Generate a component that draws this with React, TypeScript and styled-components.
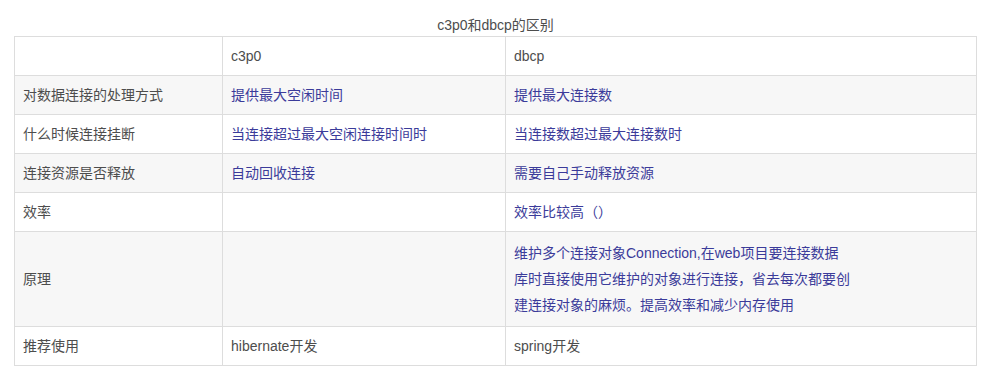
import styled, { createGlobalStyle } from "styled-components";

const GlobalStyle = createGlobalStyle`
  html, body {
    margin: 0;
    padding: 0;
    background: #fff;
  }
  body {
    font-family: "Liberation Sans", "Noto Sans CJK SC", sans-serif;
    font-size: 14px;
    color: #4d4d4d;
  }
`;

type Tone = "plain" | "link";

interface RowData {
  label: string;
  c3p0: string[];
  dbcp: string[];
  c3p0Tone?: Tone;
  dbcpTone?: Tone;
}

const rows: RowData[] = [
  { label: "对数据连接的处理方式", c3p0: ["提供最大空闲时间"], dbcp: ["提供最大连接数"], c3p0Tone: "link", dbcpTone: "link" },
  { label: "什么时候连接挂断", c3p0: ["当连接超过最大空闲连接时间时"], dbcp: ["当连接数超过最大连接数时"], c3p0Tone: "link", dbcpTone: "link" },
  { label: "连接资源是否释放", c3p0: ["自动回收连接"], dbcp: ["需要自己手动释放资源"], c3p0Tone: "link", dbcpTone: "link" },
  { label: "效率", c3p0: [], dbcp: ["效率比较高（）"], dbcpTone: "link" },
  {
    label: "原理",
    c3p0: [],
    dbcp: [
      "维护多个连接对象Connection,在web项目要连接数据",
      "库时直接使用它维护的对象进行连接，省去每次都要创",
      "建连接对象的麻烦。提高效率和减少内存使用",
    ],
    dbcpTone: "link",
  },
  { label: "推荐使用", c3p0: ["hibernate开发"], dbcp: ["spring开发"] },
];

const Page = styled.div`
  padding: 14px 16px 0 14px;
`;

const Table = styled.table`
  width: 962px;
  table-layout: fixed;
  border-collapse: collapse;
`;

const Caption = styled.caption`
  line-height: 22px;
  color: #4d4d4d;
  font-size: 14px;
`;

const Row = styled.tr<{ $shaded?: boolean }>`
  background: ${({ $shaded }) => ($shaded ? "#f7f7f7" : "#fff")};
`;

const Cell = styled.td<{ $tone?: Tone; $multi?: boolean }>`
  border: 1px solid #ddd;
  padding: 8px;
  line-height: ${({ $multi }) => ($multi ? "26px" : "22px")};
  color: ${({ $tone }) => ($tone === "link" ? "#3b3b9a" : "#4d4d4d")};
  vertical-align: middle;
  text-align: left;
  white-space: nowrap;
`;

const Lines = ({ lines }: { lines: string[] }) => (
  <>
    {lines.map((l, i) => (
      <span key={i}>
        {i > 0 && <br />}
        {l}
      </span>
    ))}
  </>
);

export default function App() {
  return (
    <Page>
      <GlobalStyle />
      <Table>
        <Caption>c3p0和dbcp的区别</Caption>
        <colgroup>
          <col style={{ width: 208 }} />
          <col style={{ width: 283 }} />
          <col style={{ width: 471 }} />
        </colgroup>
        <tbody>
          <Row>
            <Cell></Cell>
            <Cell>c3p0</Cell>
            <Cell>dbcp</Cell>
          </Row>
          {rows.map((r, i) => {
            const multi = r.dbcp.length > 1;
            return (
              <Row key={r.label} $shaded={i % 2 === 0}>
                <Cell>{r.label}</Cell>
                <Cell $tone={r.c3p0Tone} $multi={multi}>
                  <Lines lines={r.c3p0} />
                </Cell>
                <Cell $tone={r.dbcpTone} $multi={multi}>
                  <Lines lines={r.dbcp} />
                </Cell>
              </Row>
            );
          })}
        </tbody>
      </Table>
    </Page>
  );
}
